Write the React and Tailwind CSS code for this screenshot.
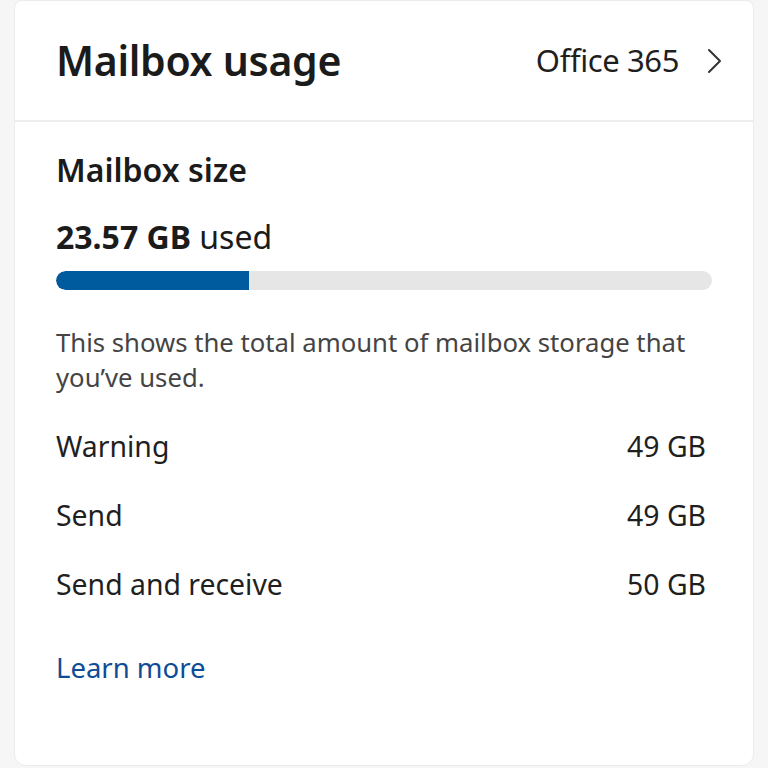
export default function App() {
    const rows = [
        { label: "Warning", value: "49 GB" },
        { label: "Send", value: "49 GB" },
        { label: "Send and receive", value: "50 GB" },
    ];

    return (
        <div className="h-[768px] w-full overflow-hidden bg-[#f6f6f6] px-[14px]" style={{ fontFamily: '"Noto Sans", "Open Sans", sans-serif' }}>
            <div className="flex h-[766px] flex-col rounded-b-xl rounded-t-lg border border-[#ebebeb] bg-white">
                <div className="flex h-[119px] items-center justify-between pl-[41px] pr-[30px]">
                    <h1 className="text-[41px] font-semibold tracking-[-0.3px] text-[#1b1b1b]">Mailbox usage</h1>
                    <div className="flex items-center gap-[28px] text-[#1f1f1f]">
                        <span className="text-[31px] tracking-[-0.4px]">Office 365</span>
                        <svg width="16" height="26" viewBox="0 0 16 26" fill="none">
                            <path d="M2 2l11 11L2 24" stroke="#333" strokeWidth="2" strokeLinecap="round" strokeLinejoin="round" />
                        </svg>
                    </div>
                </div>
                <div className="h-[2px] bg-[#eeeeee]" />

                <div className="flex flex-col pl-[41px] pr-[41px] pt-[28px]">
                    <h2 className="text-[32px] font-semibold leading-[40px] text-[#1b1b1b]">Mailbox size</h2>
                    <p className="mt-[27px] text-[32px] leading-[40px] text-[#1b1b1b]">
                        <span className="font-bold">23.57 GB</span> used
                    </p>
                    <div className="mt-[14px] h-[19px] w-full overflow-hidden rounded-full bg-[#e6e6e6]">
                        <div className="h-full rounded-l-full bg-[#005a9e]" style={{ width: "29.4%" }} />
                    </div>
                    <p className="mt-[35px] text-[25.7px] leading-[35px] text-[#444444]">
                        This shows the total amount of mailbox storage that you’ve used.
                    </p>
                    <div className="mt-[33px] flex flex-col gap-[33px] pr-[6px]">
                        {rows.map((r) => (
                            <div key={r.label} className="flex items-center justify-between text-[28.4px] leading-[36px] text-[#1f1f1f]">
                                <span>{r.label}</span>
                                <span>{r.value}</span>
                            </div>
                        ))}
                    </div>
                    <a href="#" className="mt-[48px] text-[27.5px] leading-[36px] text-[#0f4c96]">
                        Learn more
                    </a>
                </div>
            </div>
        </div>
    );
}
